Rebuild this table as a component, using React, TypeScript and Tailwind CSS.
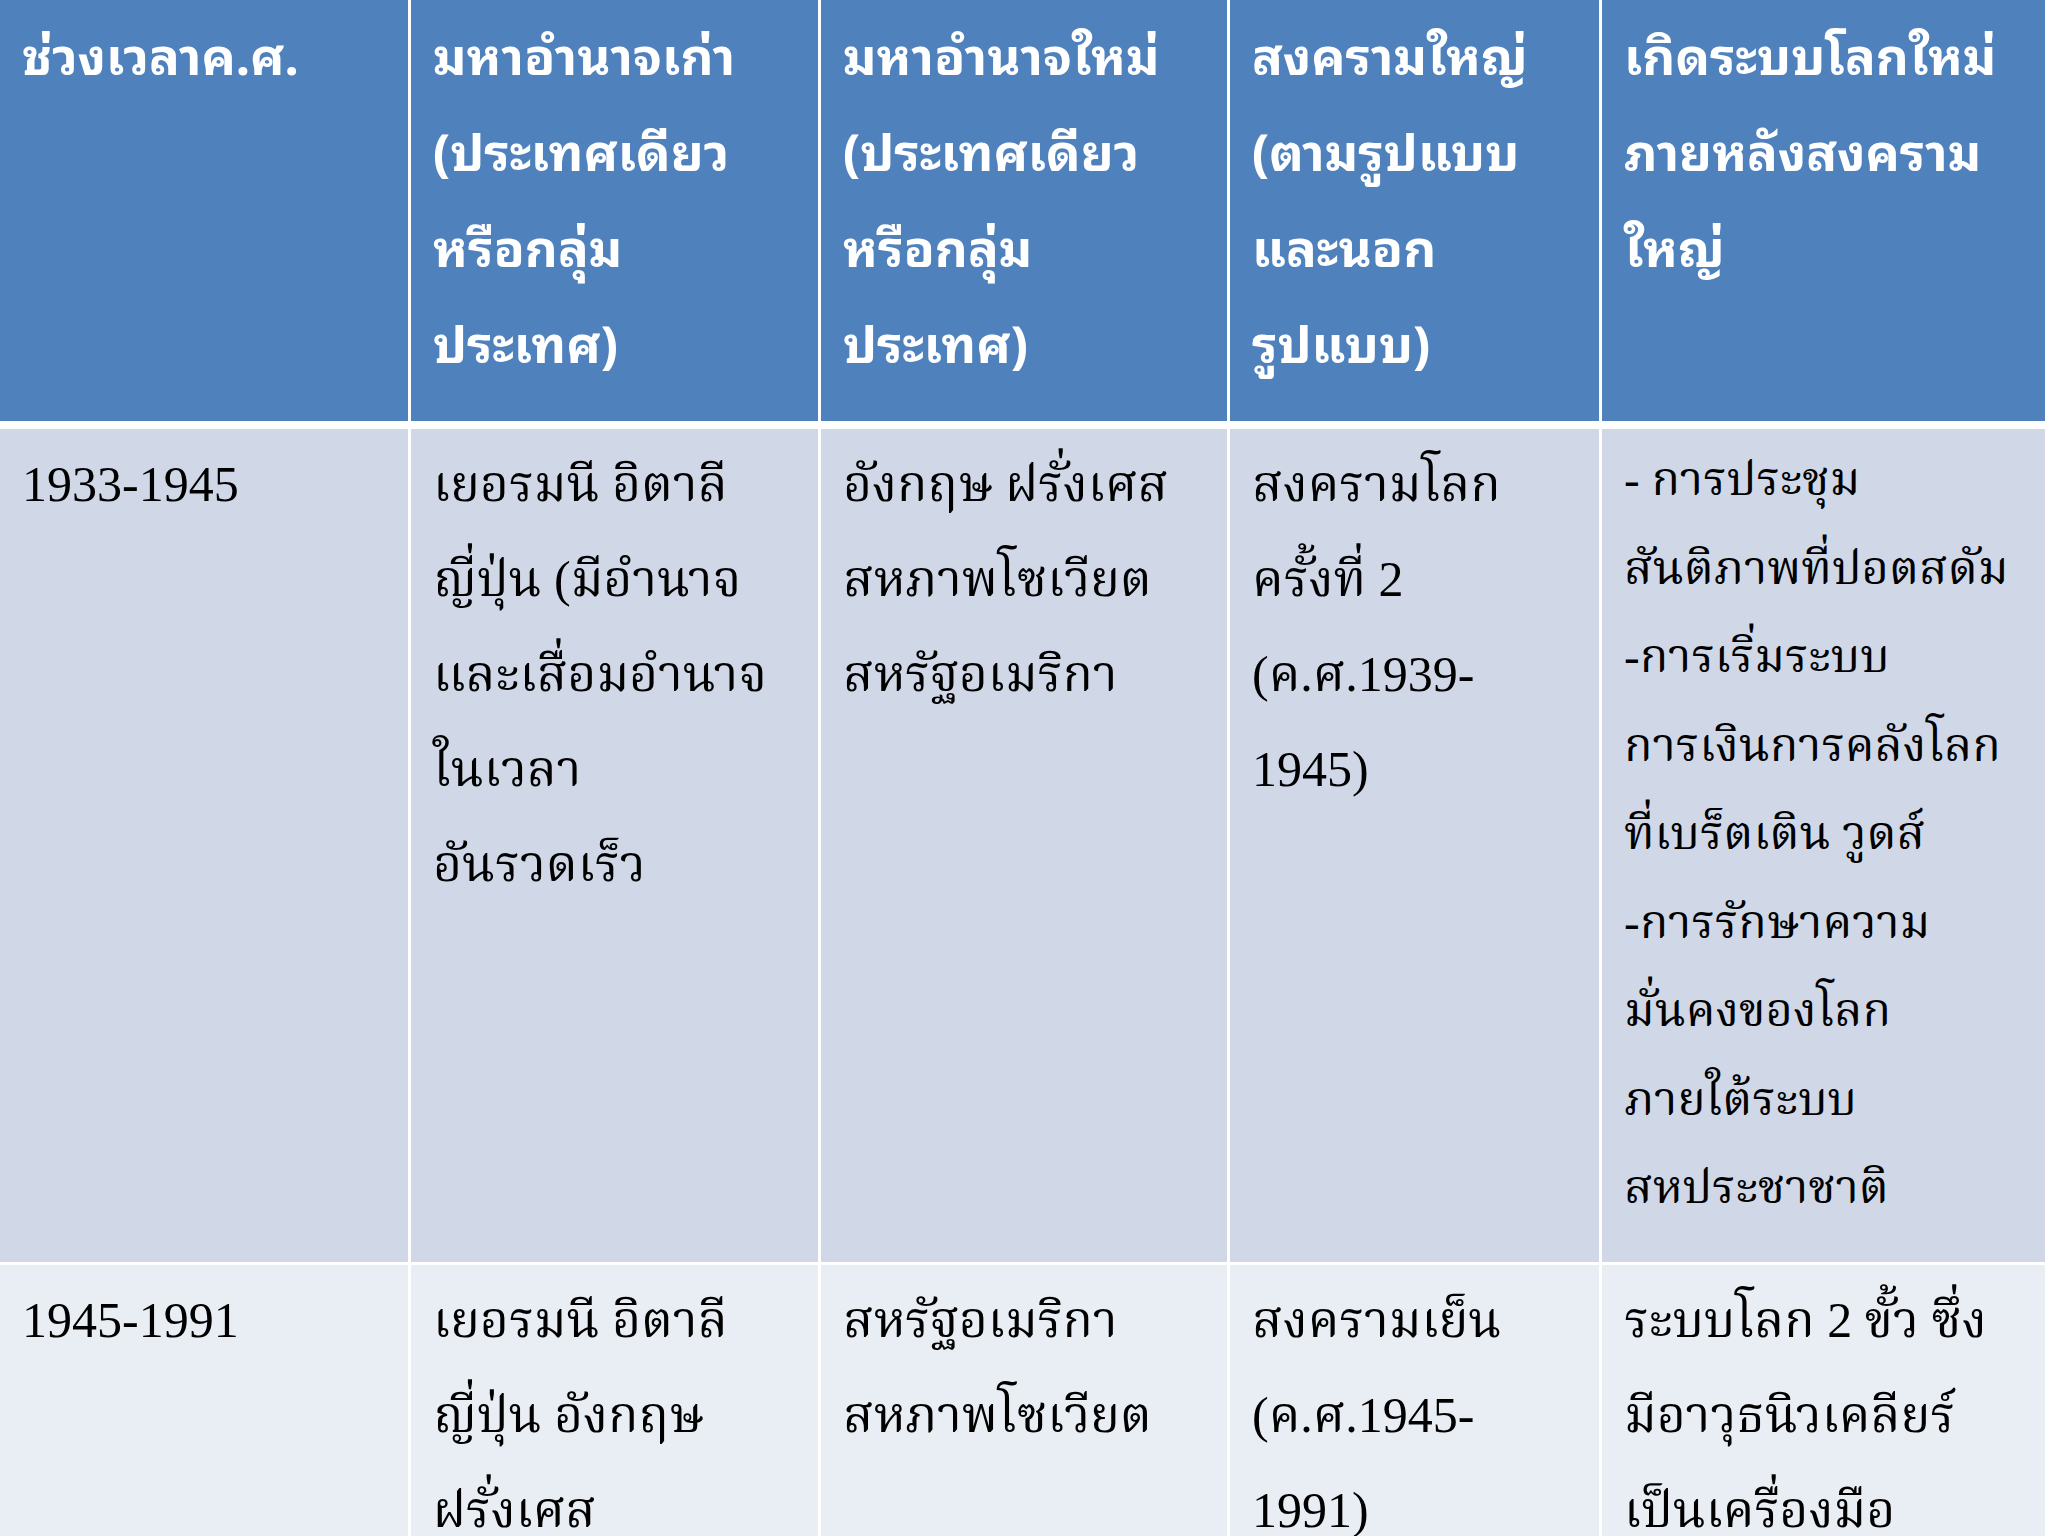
type Cell = { lines: string[]; tight?: boolean }

const header: Cell[] = [
  { lines: ['ช่วงเวลาค.ศ.'] },
  { lines: ['มหาอำนาจเก่า', '(ประเทศเดียว', 'หรือกลุ่ม', 'ประเทศ)'] },
  { lines: ['มหาอำนาจใหม่', '(ประเทศเดียว', 'หรือกลุ่ม', 'ประเทศ)'] },
  { lines: ['สงครามใหญ่', '(ตามรูปแบบ', 'และนอก', 'รูปแบบ)'] },
  { lines: ['เกิดระบบโลกใหม่', 'ภายหลังสงคราม', 'ใหญ่'] },
]

const rows: { bg: string; h: string; cells: Cell[] }[] = [
  {
    bg: 'bg-[#d0d8e8]',
    h: 'h-[833px]',
    cells: [
      { lines: ['1933-1945'] },
      { lines: ['เยอรมนี อิตาลี', 'ญี่ปุ่น (มีอำนาจ', 'และเสื่อมอำนาจ', 'ในเวลา', 'อันรวดเร็ว'] },
      { lines: ['อังกฤษ ฝรั่งเศส', 'สหภาพโซเวียต', 'สหรัฐอเมริกา'] },
      { lines: ['สงครามโลก', 'ครั้งที่ 2', '(ค.ศ.1939-', '1945)'] },
      {
        // this cell is autofit in the original, lines sit closer together
        tight: true,
        lines: [
          '- การประชุม',
          'สันติภาพที่ปอตสดัม',
          '-การเริ่มระบบ',
          'การเงินการคลังโลก',
          'ที่เบร็ตเติน วูดส์',
          '-การรักษาความ',
          'มั่นคงของโลก',
          'ภายใต้ระบบ',
          'สหประชาชาติ',
        ],
      },
    ],
  },
  {
    bg: 'bg-[#e9edf4]',
    h: 'h-[300px]',
    cells: [
      { lines: ['1945-1991'] },
      { lines: ['เยอรมนี อิตาลี', 'ญี่ปุ่น อังกฤษ', 'ฝรั่งเศส'] },
      { lines: ['สหรัฐอเมริกา', 'สหภาพโซเวียต'] },
      { lines: ['สงครามเย็น', '(ค.ศ.1945-', '1991)'] },
      { lines: ['ระบบโลก 2 ขั้ว ซึ่ง', 'มีอาวุธนิวเคลียร์', 'เป็นเครื่องมือ'] },
    ],
  },
]

const cols = 'grid grid-cols-[408px_407px_406px_369px_443px] gap-x-[3px]'

export default function App() {
  return (
    <div className="w-[2048px] h-[1536px] overflow-hidden bg-white">
      <div className={`${cols} h-[421px]`}>
        {header.map((c, i) => (
          <div
            key={i}
            className="bg-[#4f81bd] px-[22px] pt-[4px] text-white font-bold text-[51px] leading-[96px] font-['Noto_Sans_Thai_Looped','Noto_Sans_Thai',sans-serif]"
          >
            {c.lines.map((l) => (
              <div key={l} className="whitespace-nowrap">{l}</div>
            ))}
          </div>
        ))}
      </div>

      {rows.map((r, ri) => (
        <div key={ri} className={`${cols} ${r.h} ${ri === 0 ? 'mt-[8px]' : 'mt-[3px]'}`}>
          {r.cells.map((c, i) => (
            <div
              key={i}
              className={`${r.bg} px-[22px] text-black font-['Liberation_Serif','Noto_Serif_Thai',serif] ${
                c.tight ? 'pt-[6px] text-[47px] leading-[88.5px]' : 'pt-[8px] text-[50px] leading-[95px]'
              }`}
            >
              {c.lines.map((l) => (
                <div key={l} className="whitespace-nowrap">{l}</div>
              ))}
            </div>
          ))}
        </div>
      ))}
    </div>
  )
}
